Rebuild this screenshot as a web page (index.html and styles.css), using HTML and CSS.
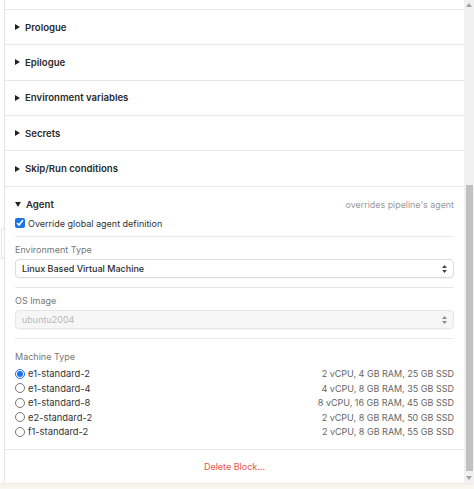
FILE: index.html
```html
<!DOCTYPE html>
<html lang="en">
<head>
<meta charset="utf-8">
<title>Block settings</title>
<link rel="stylesheet" href="styles.css">
</head>
<body>
<div class="frame">
  <div class="gutter"><div class="handle"></div></div>
  <div class="panel">
    <div class="row row-top"></div>
    <div class="row"><svg class="tri" viewBox="0 0 6 7"><path d="M0 0L6 3.5L0 7Z"/></svg><span>Prologue</span></div>
    <div class="row"><svg class="tri" viewBox="0 0 6 7"><path d="M0 0L6 3.5L0 7Z"/></svg><span>Epilogue</span></div>
    <div class="row"><svg class="tri" viewBox="0 0 6 7"><path d="M0 0L6 3.5L0 7Z"/></svg><span>Environment variables</span></div>
    <div class="row"><svg class="tri" viewBox="0 0 6 7"><path d="M0 0L6 3.5L0 7Z"/></svg><span>Secrets</span></div>
    <div class="row"><svg class="tri" viewBox="0 0 6 7"><path d="M0 0L6 3.5L0 7Z"/></svg><span>Skip/Run conditions</span></div>
    <div class="agent">
      <div class="agent-head">
        <div class="title"><svg class="tri-down" viewBox="0 0 7 6"><path d="M0 0L7 0L3.5 6Z"/></svg><span>Agent</span></div>
        <div class="hint">overrides pipeline's agent</div>
      </div>
      <label class="check"><input type="checkbox" checked><span>Override global agent definition</span></label>
      <div class="field">
        <div class="label">Environment Type</div>
        <div class="select"><span>Linux Based Virtual Machine</span><svg class="arrows" viewBox="0 0 6 10"><path d="M3 0L6 3.6H0Z M3 10L6 6.4H0Z"/></svg></div>
      </div>
      <div class="field">
        <div class="label">OS Image</div>
        <div class="select disabled"><span>ubuntu2004</span><svg class="arrows" viewBox="0 0 6 10"><path d="M3 0L6 3.6H0Z M3 10L6 6.4H0Z"/></svg></div>
      </div>
      <div class="field last">
        <div class="label">Machine Type</div>
        <div class="radios">
          <label class="radio"><input type="radio" name="m" checked><span class="name">e1-standard-2</span><span class="spec">2 vCPU, 4 GB RAM, 25 GB SSD</span></label>
          <label class="radio"><input type="radio" name="m"><span class="name">e1-standard-4</span><span class="spec">4 vCPU, 8 GB RAM, 35 GB SSD</span></label>
          <label class="radio"><input type="radio" name="m"><span class="name">e1-standard-8</span><span class="spec">8 vCPU, 16 GB RAM, 45 GB SSD</span></label>
          <label class="radio"><input type="radio" name="m"><span class="name">e2-standard-2</span><span class="spec">2 vCPU, 8 GB RAM, 50 GB SSD</span></label>
          <label class="radio"><input type="radio" name="m"><span class="name">f1-standard-2</span><span class="spec">2 vCPU, 8 GB RAM, 55 GB SSD</span></label>
        </div>
      </div>
    </div>
    <div class="delete"><span>Delete Block...</span></div>
  </div>
  <div class="scrollbar">
    <svg class="sb-arrow" viewBox="0 0 10 10"><path d="M5 3L8 7H2Z"/></svg>
    <div class="sb-space"></div>
    <div class="sb-thumb"></div>
    <svg class="sb-arrow" viewBox="0 0 10 10"><path d="M5 7L8 3H2Z"/></svg>
  </div>
</div>
</body>
</html>
```

FILE: styles.css
```css
* { box-sizing: border-box; }
html, body { margin: 0; padding: 0; }
body {
  background: #f8f6ef;
  font-family: Inter, "Noto Sans", sans-serif;
  font-size: 9px;
  color: #333;
  width: 474px;
  height: 489px;
  overflow: hidden;
}
.frame {
  display: flex;
  height: 483px;
  background: #fff;
  box-shadow: 0 1px 2px rgba(0,0,0,0.06);
}
.gutter {
  width: 4px;
  padding-top: 228px;
  background: #fff;
}
.handle {
  width: 3px;
  height: 31px;
  margin-left: 1px;
  border: 1px solid #e4e4e4;
  border-right: none;
  border-radius: 2px 0 0 2px;
}
.panel {
  flex: 1;
  display: flex;
  flex-direction: column;
  border-left: 1px solid #e6e6e6;
  background: #fff;
}
.row {
  height: 35.5px;
  border-bottom: 1px solid #e8e8e8;
  display: flex;
  align-items: center;
  padding-left: 10px;
  font-size: 9.6px;
  font-weight: 600;
  color: #2b2b2b;
}
.row-top { height: 10px; }
.tri { width: 5px; height: 6px; fill: #222; margin-right: 5px; }
.tri-down { width: 6px; height: 5px; fill: #222; margin-right: 5px; }
.agent {
  padding: 10.5px 10px 10px 10px;
  border-bottom: 1px solid #e8e8e8;
}
.agent-head {
  display: flex;
  justify-content: space-between;
  align-items: center;
  height: 14px;
}
.title { display: flex; align-items: center; font-size: 9.6px; font-weight: 600; color: #2b2b2b; }
.hint { color: #9a9a9a; font-size: 8.9px; }
.check {
  display: flex;
  align-items: center;
  height: 14px;
  margin-top: 5px;
  color: #333;
}
.check input {
  width: 10px;
  height: 10px;
  margin: 0 3px 0 0;
  accent-color: #1a73e8;
}
.field {
  margin-top: 6px;
  padding-top: 6px;
  border-top: 1px solid #e8e8e8;
  padding-bottom: 3px;
}
.field.last { padding-top: 10.5px; padding-bottom: 0; }
.label { color: #777; height: 13px; line-height: 13px; }
.select {
  margin-top: 3px;
  height: 19px;
  border: 1px solid #dcdcdc;
  border-radius: 4px;
  display: flex;
  align-items: center;
  justify-content: space-between;
  padding: 0 6px 0 6px;
  color: #2b2b2b;
  font-weight: 500;
  background: #fff;
  box-shadow: 0 1px 1px rgba(0,0,0,0.03);
}
.select.disabled { background: #f6f6f6; color: #b8b8b8; border-color: #e6e6e6; font-weight: 400; }
.arrows { width: 5px; height: 8px; fill: #444; }
.select.disabled .arrows { fill: #888; }
.radios { margin-top: 4px; }
.radio {
  display: flex;
  align-items: center;
  height: 14.5px;
  color: #333;
}
.radio input {
  width: 10px;
  height: 10px;
  margin: 0 3px 0 0;
  accent-color: #1a73e8;
}
.radio .name { flex: 1; font-size: 9.4px; }
.radio .spec { color: #666; }
.delete {
  height: 33px;
  display: flex;
  align-items: center;
  justify-content: center;
  color: #e5524b;
}
.scrollbar {
  width: 10px;
  display: flex;
  flex-direction: column;
  align-items: center;
  background: #f1f1f1;
}
.sb-arrow { width: 10px; height: 10px; fill: #a3a3a3; flex: none; }
.sb-space { height: 175px; flex: none; }
.sb-thumb { flex: 1; width: 7px; background: #c1c1c1; margin-bottom: 2px; }
```
